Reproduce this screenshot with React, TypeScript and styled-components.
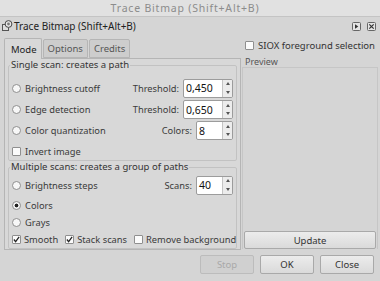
import styled, { createGlobalStyle } from 'styled-components';

const Global = createGlobalStyle`
  html, body {
    margin: 0;
    padding: 0;
    background: #d5d5d5;
    font-family: "Noto Sans", "Open Sans", sans-serif;
    font-size: 9.3px;
    color: #3a3a3a;
  }
`;

const Window = styled.div`
  width: 380px;
  height: 281px;
  display: flex;
  flex-direction: column;
  overflow: hidden;
  background: #d5d5d5;
`;

const TitleBar = styled.div`
  height: 16px;
  flex-shrink: 0;
  display: flex;
  align-items: center;
  justify-content: center;
  padding-right: 10px;
  background: #e1e1e1;
  border-bottom: 1px solid #c4c4c4;
  color: #8c8c8c;
  font-size: 10.5px;
  letter-spacing: 0.8px;
`;

const DockHeader = styled.div`
  height: 17px;
  flex-shrink: 0;
  display: flex;
  align-items: center;
  padding: 0 4px 0 2px;
  gap: 1px;
  color: #222;
  font-size: 10px;
`;

const DockTitle = styled.span`
  flex: 1;
`;

const DockButtons = styled.div`
  display: flex;
  gap: 6px;
  padding-top: 2px;
`;

const Body = styled.div`
  display: flex;
  padding: 3px 2px 0 4px;
  gap: 1px;
`;

const Notebook = styled.div`
  width: 237px;
  flex-shrink: 0;
  display: flex;
  flex-direction: column;
`;

const TabRow = styled.div`
  display: flex;
  gap: 1px;
  height: 21px;
  align-items: flex-end;
`;

const Tab = styled.div<{ $active?: boolean }>`
  height: ${p => (p.$active ? 21 : 19)}px;
  box-sizing: border-box;
  padding: 0 4px 0 ${p => (p.$active ? 6 : 4)}px;
  display: flex;
  align-items: center;
  border: 1px solid #b5b5b5;
  border-bottom: ${p => (p.$active ? 'none' : '1px solid #b5b5b5')};
  border-radius: 2px 2px 0 0;
  background: ${p => (p.$active ? '#d8d8d8' : '#cdcdcd')};
  color: ${p => (p.$active ? '#222' : '#555')};
  font-size: 9.5px;
  margin-bottom: ${p => (p.$active ? -1 : 0)}px;
  position: relative;
`;

const Panel = styled.div`
  height: 192px;
  box-sizing: border-box;
  border: 1px solid #b5b5b5;
  background: #d8d8d8;
  padding: 1px 3px 0 3px;
  display: flex;
  flex-direction: column;
  gap: 1px;
`;

const Frame = styled.fieldset<{ $h: number; $top: number }>`
  margin: 0;
  min-width: 0;
  height: ${p => p.$h}px;
  box-sizing: border-box;
  border: 1px solid #c2c2c2;
  border-radius: 2px;
  padding: ${p => p.$top}px 0 0 3px;
  display: flex;
  flex-direction: column;
`;

const Legend = styled.legend`
  padding: 0 1px;
  margin-left: -2px;
  color: #333;
  font-size: 9.5px;
  line-height: 10px;
`;

const Row = styled.div<{ $h: number }>`
  height: ${p => p.$h}px;
  flex-shrink: 0;
  display: flex;
  align-items: center;
  gap: 3px;
  padding-right: 3px;
  white-space: nowrap;
`;

const RowLabel = styled.span`
  flex: 1;
  padding-left: 1px;
`;

const InlineLabel = styled.span`
  margin-right: 4px;
`;

const FieldLabel = styled.span`
  color: #3a3a3a;
  margin-right: 1px;
`;

const Radio = styled.span<{ $on?: boolean }>`
  width: 9px;
  height: 9px;
  box-sizing: border-box;
  border-radius: 50%;
  border: 1px solid #8f8f8f;
  background: ${p => (p.$on ? 'radial-gradient(circle, #222 0 1.6px, #f4f4f4 2.2px)' : '#f7f7f7')};
  flex-shrink: 0;
`;

const CheckBox = styled.span`
  width: 9px;
  height: 9px;
  box-sizing: border-box;
  border: 1px solid #8f8f8f;
  background: #fbfbfb;
  border-radius: 1px;
  flex-shrink: 0;
  display: flex;
  align-items: center;
  justify-content: center;
`;

const Spin = styled.div<{ $w: number }>`
  width: ${p => p.$w}px;
  height: 19px;
  flex-shrink: 0;
  box-sizing: border-box;
  display: flex;
  border: 1px solid #9c9c9c;
  border-radius: 2px;
  background: #fff;
  overflow: hidden;
`;

const SpinValue = styled.span`
  flex: 1;
  display: flex;
  align-items: center;
  padding-left: 2px;
  color: #111;
  font-size: 10.5px;
`;

const SpinArrows = styled.div`
  width: 9px;
  display: flex;
  flex-direction: column;
  background: #ececec;
  border-left: 1px solid #c4c4c4;
`;

const Arrow = styled.span`
  flex: 1;
  display: flex;
  align-items: center;
  justify-content: center;
`;

const Side = styled.div`
  flex: 1;
  display: flex;
  flex-direction: column;
`;

const SioxRow = styled.div`
  display: flex;
  align-items: center;
  gap: 4px;
  height: 14px;
  padding: 0 0 0 3px;
  margin-top: 1px;
  color: #333;
  font-size: 9.5px;
`;

const PreviewLabel = styled.div`
  padding: 3px 0 0 3px;
  height: 10px;
  color: #555;
  font-size: 9px;
`;

const PreviewBox = styled.div`
  margin-top: 2px;
  height: 182px;
  box-sizing: border-box;
  border: 1px solid #c6c6c6;
  border-bottom: none;
  display: flex;
  flex-direction: column;
  justify-content: flex-end;
`;

const Button = styled.div<{ $disabled?: boolean }>`
  height: 19px;
  box-sizing: border-box;
  display: flex;
  align-items: center;
  justify-content: center;
  border: 1px solid ${p => (p.$disabled ? '#bcbcbc' : '#a9a9a9')};
  border-radius: 2px;
  background: ${p => (p.$disabled ? '#d0d0d0' : 'linear-gradient(#ececec, #dadada)')};
  color: ${p => (p.$disabled ? '#a9a9a9' : '#333')};
  font-size: 9.5px;
`;

const WideButton = styled(Button)`
  margin: 0 1px;
  height: 18px;
`;

const Footer = styled.div`
  display: flex;
  justify-content: flex-end;
  gap: 6px;
  padding: 5px 6px 0 0;
`;

const FooterButton = styled(Button)`
  width: 54px;
`;

function Check() {
  return (
    <svg width="8" height="7" viewBox="0 0 8 7">
      <path d="M1 3.5 L3 6 L7 0.5" fill="none" stroke="#222" strokeWidth="1.4" />
    </svg>
  );
}

function SpinBox({ value, w }: { value: string; w: number }) {
  return (
    <Spin $w={w}>
      <SpinValue>{value}</SpinValue>
      <SpinArrows>
        <Arrow>
          <svg width="4" height="3" viewBox="0 0 4 3"><path d="M0 3 L2 0 L4 3Z" fill="#555" /></svg>
        </Arrow>
        <Arrow>
          <svg width="4" height="3" viewBox="0 0 4 3"><path d="M0 0 L2 3 L4 0Z" fill="#555" /></svg>
        </Arrow>
      </SpinArrows>
    </Spin>
  );
}

function DockIcon() {
  return (
    <svg width="11" height="11" viewBox="0 0 11 11">
      <rect x="0.5" y="4.5" width="6" height="6" fill="#ddd" stroke="#555" />
      <circle cx="6.5" cy="4" r="3.4" fill="#e8e8e8" stroke="#444" />
      <circle cx="6.5" cy="4" r="1.4" fill="#777" />
    </svg>
  );
}

function SmallBtn({ kind }: { kind: 'arrow' | 'close' }) {
  return (
    <svg width="9" height="9" viewBox="0 0 9 9">
      <rect x="0.5" y="0.5" width="8" height="8" rx="1" fill="#e4e4e4" stroke="#666" />
      {kind === 'arrow' ? (
        <path d="M3 2.2 L6.3 4.5 L3 6.8Z" fill="#333" />
      ) : (
        <path d="M2.3 2.3 L6.7 6.7 M6.7 2.3 L2.3 6.7" stroke="#333" strokeWidth="1.2" />
      )}
    </svg>
  );
}

export default function App() {
  return (
    <Window>
      <Global />
      <TitleBar>Trace Bitmap (Shift+Alt+B)</TitleBar>
      <DockHeader>
        <DockIcon />
        <DockTitle>Trace Bitmap (Shift+Alt+B)</DockTitle>
        <DockButtons>
          <SmallBtn kind="arrow" />
          <SmallBtn kind="close" />
        </DockButtons>
      </DockHeader>
      <Body>
        <Notebook>
          <TabRow>
            <Tab $active>Mode</Tab>
            <Tab>Options</Tab>
            <Tab>Credits</Tab>
          </TabRow>
          <Panel>
            <Frame $h={101} $top={7}>
              <Legend>Single scan: creates a path</Legend>
              <Row $h={22}>
                <Radio />
                <RowLabel>Brightness cutoff</RowLabel>
                <FieldLabel>Threshold:</FieldLabel>
                <SpinBox value="0,450" w={50} />
              </Row>
              <Row $h={21}>
                <Radio />
                <RowLabel>Edge detection</RowLabel>
                <FieldLabel>Threshold:</FieldLabel>
                <SpinBox value="0,650" w={50} />
              </Row>
              <Row $h={21}>
                <Radio />
                <RowLabel>Color quantization</RowLabel>
                <FieldLabel>Colors:</FieldLabel>
                <SpinBox value="8" w={37} />
              </Row>
              <Row $h={20}>
                <CheckBox />
                <RowLabel>Invert image</RowLabel>
              </Row>
            </Frame>
            <Frame $h={87} $top={3}>
              <Legend>Multiple scans: creates a group of paths</Legend>
              <Row $h={20}>
                <Radio />
                <RowLabel>Brightness steps</RowLabel>
                <FieldLabel>Scans:</FieldLabel>
                <SpinBox value="40" w={37} />
              </Row>
              <Row $h={20}>
                <Radio $on />
                <RowLabel>Colors</RowLabel>
              </Row>
              <Row $h={15}>
                <Radio />
                <RowLabel>Grays</RowLabel>
              </Row>
              <Row $h={19}>
                <CheckBox><Check /></CheckBox>
                <InlineLabel>Smooth</InlineLabel>
                <CheckBox><Check /></CheckBox>
                <InlineLabel>Stack scans</InlineLabel>
                <CheckBox />
                <span>Remove background</span>
              </Row>
            </Frame>
          </Panel>
        </Notebook>
        <Side>
          <SioxRow>
            <CheckBox />
            <span>SIOX foreground selection</span>
          </SioxRow>
          <PreviewLabel>Preview</PreviewLabel>
          <PreviewBox>
            <WideButton>Update</WideButton>
          </PreviewBox>
        </Side>
      </Body>
      <Footer>
        <FooterButton $disabled>Stop</FooterButton>
        <FooterButton>OK</FooterButton>
        <FooterButton>Close</FooterButton>
      </Footer>
    </Window>
  );
}
